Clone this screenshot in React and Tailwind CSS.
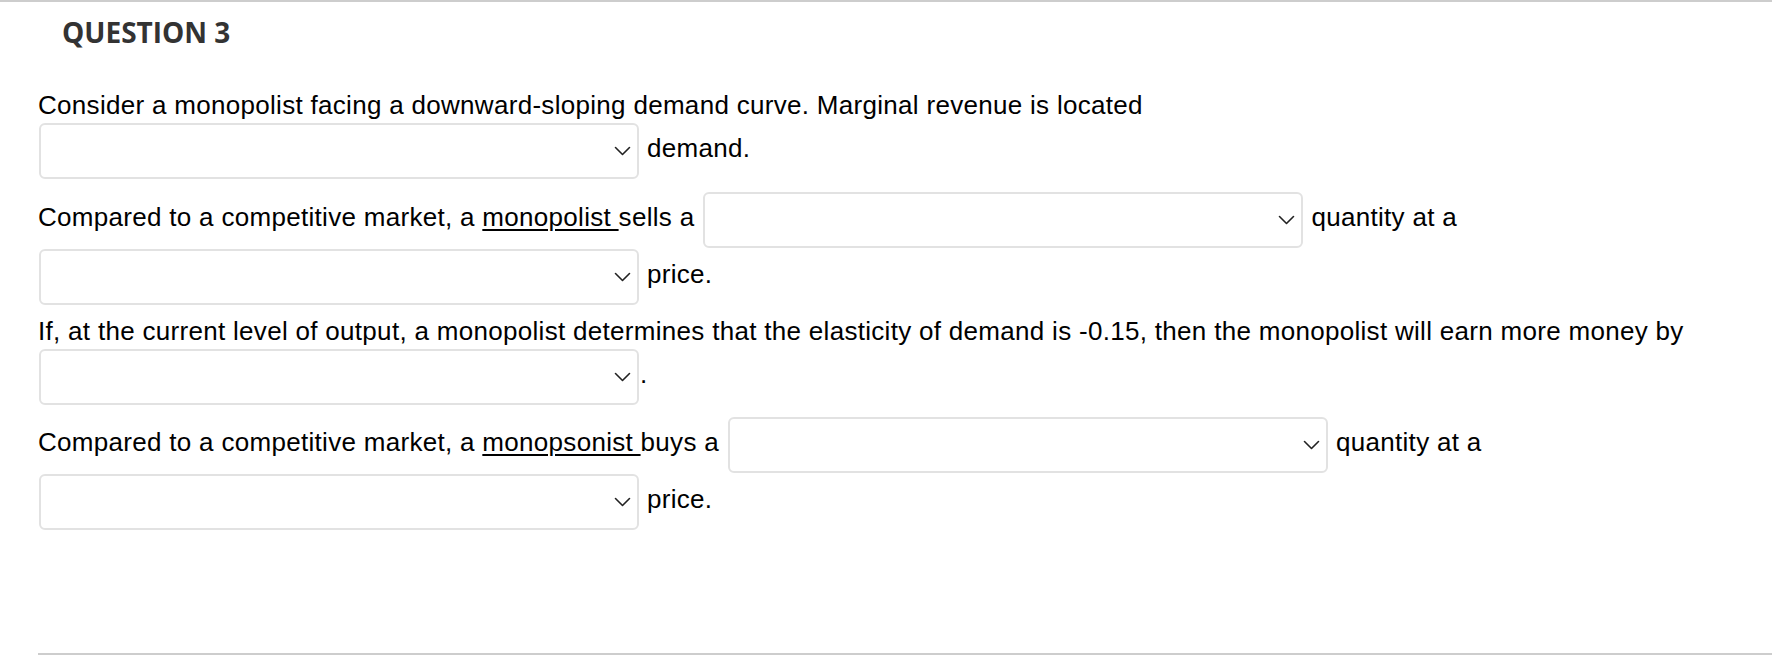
import React from "react";

function Sel({ className = "" }) {
  return (
    <div
      className={`flex h-[56px] w-[600px] shrink-0 items-center justify-end rounded-[6px] border-2 border-[#e2e2e2] bg-white pr-[6px] ${className}`}
    >
      <svg width="17" height="10" viewBox="0 0 17 10" aria-hidden="true">
        <path d="M1.5 1.5L8.5 8.5L15.5 1.5" fill="none" stroke="#222" strokeWidth="1.6" strokeLinecap="round" strokeLinejoin="round" />
      </svg>
    </div>
  );
}

export default function App() {
  return (
    <div className="min-h-[666px] w-full overflow-hidden border-t-2 border-[#cdcdcd] bg-white font-['Liberation_Sans',Arial,sans-serif] text-[26px] tracking-[0.3px] text-black">
      <div className="pl-[62px] pt-[15px] font-['Open_Sans',sans-serif] text-[28px] font-bold leading-[30px] tracking-normal text-[#333]">
        QUESTION 3
      </div>

      <div className="mt-[42px] pl-[38px]">
        <div className="flex h-[33px] items-center whitespace-nowrap">
          Consider a monopolist facing a downward-sloping demand curve. Marginal revenue is located
        </div>
        <div className="flex h-[57px] items-center whitespace-nowrap">
          <Sel className="ml-[1px]" />
          <span className="ml-[8px] pb-[5px]">demand.</span>
        </div>
      </div>

      <div className="mt-[12px] pl-[38px]">
        <div className="flex h-[57px] items-center whitespace-nowrap">
          <span className="pb-[5px]">
            Compared to a competitive market, a <span className="underline decoration-[1.5px] underline-offset-[3px]">monopolist </span>sells a
          </span>
          <Sel className="ml-[9px]" />
          <span className="ml-[8px] pb-[5px]">quantity at a</span>
        </div>
        <div className="flex h-[57px] items-center whitespace-nowrap">
          <Sel className="ml-[1px]" />
          <span className="ml-[8px] pb-[5px]">price.</span>
        </div>
      </div>

      <div className="mt-[10px] pl-[38px]">
        <div className="flex h-[33px] items-center whitespace-nowrap">
          If, at the current level of output, a monopolist determines that the elasticity of demand is -0.15, then the monopolist will earn more money by
        </div>
        <div className="flex h-[57px] items-center whitespace-nowrap">
          <Sel className="ml-[1px]" />
          <span className="ml-[1px] pb-[5px]">.</span>
        </div>
      </div>

      <div className="mt-[11px] pl-[38px]">
        <div className="flex h-[57px] items-center whitespace-nowrap">
          <span className="pb-[5px]">
            Compared to a competitive market, a <span className="underline decoration-[1.5px] underline-offset-[3px]">monopsonist </span>buys a
          </span>
          <Sel className="ml-[9px]" />
          <span className="ml-[8px] pb-[5px]">quantity at a</span>
        </div>
        <div className="flex h-[57px] items-center whitespace-nowrap">
          <Sel className="ml-[1px]" />
          <span className="ml-[8px] pb-[5px]">price.</span>
        </div>
      </div>

      <div className="ml-[38px] mt-[123px] h-[2px] bg-[#cdcdcd]" />
    </div>
  );
}
